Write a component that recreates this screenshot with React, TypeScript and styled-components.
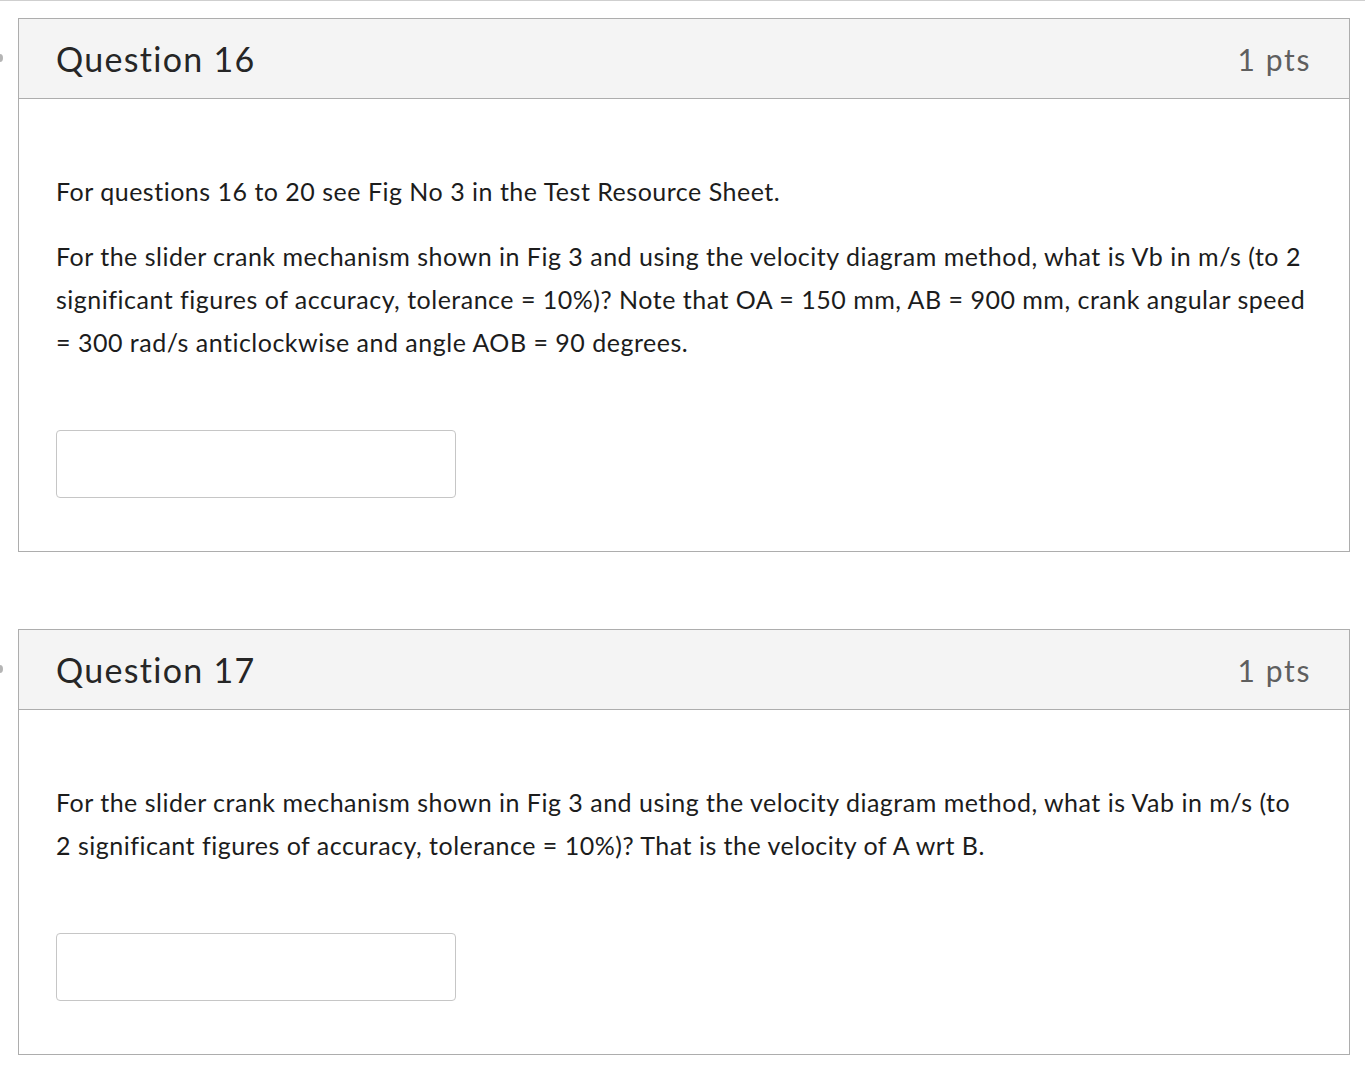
import React from 'react';
import styled, { createGlobalStyle } from 'styled-components';

const GlobalStyle = createGlobalStyle`
    html, body {
        margin: 0;
        padding: 0;
        background: #ffffff;
    }
`;

const Page = styled.div`
    border-top: 1px solid #cfcfcf;
    padding: 17px 15px 24px 18px;
    display: flex;
    flex-direction: column;
    gap: 77px;
`;

const Card = styled.section`
    position: relative;
    border: 1px solid #adadad;
    background: #ffffff;
    &::before {
        content: '';
        position: absolute;
        left: -22px;
        top: 35px;
        width: 6px;
        height: 8px;
        border-radius: 50%;
        background: #b5b5b5;
    }
`;

const Header = styled.header`
    height: 79px;
    display: flex;
    align-items: center;
    justify-content: space-between;
    padding: 0 38px 0 37px;
    background: #f4f4f4;
    border-bottom: 1px solid #adadad;
    font-family: Lato, 'Open Sans', sans-serif;
`;

const Title = styled.h2`
    margin: 0;
    font-size: 34px;
    font-weight: 400;
    color: #262626;
    letter-spacing: 1.3px;
`;

const Points = styled.span`
    font-size: 30px;
    color: #5f5f5f;
    letter-spacing: 1.6px;
`;

const Body = styled.div`
    padding: 71px 37px 53px 37px;
    font-family: Lato, 'Noto Sans', sans-serif;
    color: #1c1c1c;
`;

const Text = styled.p`
    margin: 0 0 22px;
    font-size: 25px;
    line-height: 43px;
    letter-spacing: 0.5px;
    white-space: nowrap;
    &:last-of-type {
        margin-bottom: 66px;
    }
`;

const Answer = styled.input`
    display: block;
    box-sizing: border-box;
    width: 400px;
    height: 68px;
    border: 1px solid #c6c6c6;
    border-radius: 4px;
    background: #fff;
    outline: none;
`;

type Question = {
    n: number;
    pts: number;
    paragraphs: string[][];
};

const questions: Question[] = [
    {
        n: 16,
        pts: 1,
        paragraphs: [
            ['For questions 16 to 20 see Fig No 3 in the Test Resource Sheet.'],
            [
                'For the slider crank mechanism shown in Fig 3 and using the velocity diagram method, what is Vb in m/s (to 2',
                'significant figures of accuracy, tolerance = 10%)? Note that OA = 150 mm, AB = 900 mm, crank angular speed',
                '= 300 rad/s anticlockwise and angle AOB = 90 degrees.',
            ],
        ],
    },
    {
        n: 17,
        pts: 1,
        paragraphs: [
            [
                'For the slider crank mechanism shown in Fig 3 and using the velocity diagram method, what is Vab in m/s (to',
                '2 significant figures of accuracy, tolerance = 10%)? That is the velocity of A wrt B.',
            ],
        ],
    },
];

const App: React.FC = () => {
    return (
        <>
            <GlobalStyle />
            <Page>
                {questions.map((q) => (
                    <Card key={q.n}>
                        <Header>
                            <Title>Question {q.n}</Title>
                            <Points>{q.pts} pts</Points>
                        </Header>
                        <Body>
                            {q.paragraphs.map((lines, i) => (
                                <Text key={i}>
                                    {lines.map((line, j) => (
                                        <React.Fragment key={j}>
                                            {j > 0 && <br />}
                                            {line}
                                        </React.Fragment>
                                    ))}
                                </Text>
                            ))}
                            <Answer type="text" aria-label={`Answer for question ${q.n}`} />
                        </Body>
                    </Card>
                ))}
            </Page>
        </>
    );
};

export default App;
